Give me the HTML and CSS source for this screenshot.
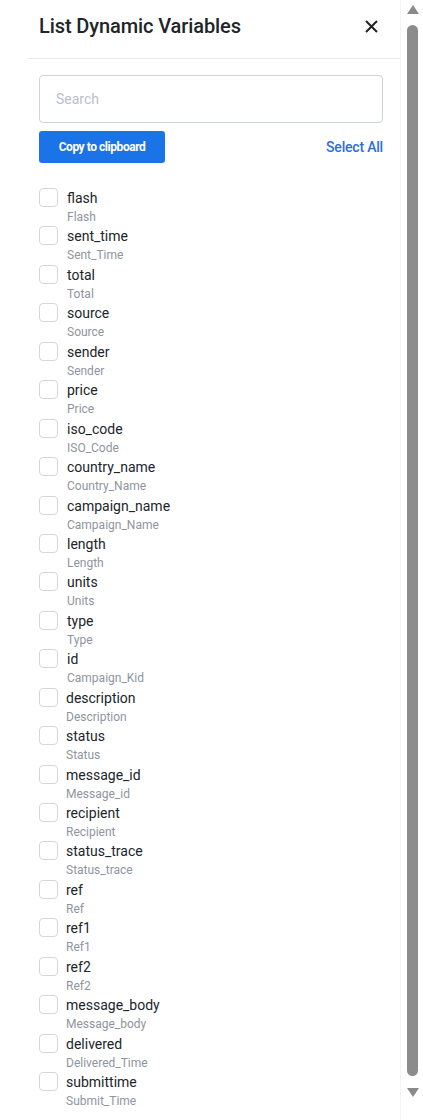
FILE: index.html
```html
<!DOCTYPE html>
<html>
<head>
<meta charset="utf-8">
<link rel="stylesheet" href="styles.css">
</head>
<body>
<div class="page">
  <div class="modal">
    <div class="header">
      <h1 class="title">List Dynamic Variables</h1>
      <button class="close" aria-label="Close">
        <svg width="13" height="13" viewBox="0 0 13 13"><path d="M1 1L12 12M12 1L1 12" stroke="#222" stroke-width="2" fill="none"/></svg>
      </button>
    </div>
    <div class="body">
      <input class="search" type="text" placeholder="Search">
      <div class="actions">
        <button class="copy">Copy to clipboard</button>
        <a class="select-all">Select All</a>
      </div>
      <ul class="list">
        <li class="item"><span class="box"></span><div class="text"><div class="name">flash</div><div class="sub">Flash</div></div></li>
        <li class="item"><span class="box"></span><div class="text"><div class="name">sent_time</div><div class="sub">Sent_Time</div></div></li>
        <li class="item"><span class="box"></span><div class="text"><div class="name">total</div><div class="sub">Total</div></div></li>
        <li class="item"><span class="box"></span><div class="text"><div class="name">source</div><div class="sub">Source</div></div></li>
        <li class="item"><span class="box"></span><div class="text"><div class="name">sender</div><div class="sub">Sender</div></div></li>
        <li class="item"><span class="box"></span><div class="text"><div class="name">price</div><div class="sub">Price</div></div></li>
        <li class="item"><span class="box"></span><div class="text"><div class="name">iso_code</div><div class="sub">ISO_Code</div></div></li>
        <li class="item"><span class="box"></span><div class="text"><div class="name">country_name</div><div class="sub">Country_Name</div></div></li>
        <li class="item"><span class="box"></span><div class="text"><div class="name">campaign_name</div><div class="sub">Campaign_Name</div></div></li>
        <li class="item"><span class="box"></span><div class="text"><div class="name">length</div><div class="sub">Length</div></div></li>
        <li class="item"><span class="box"></span><div class="text"><div class="name">units</div><div class="sub">Units</div></div></li>
        <li class="item"><span class="box"></span><div class="text"><div class="name">type</div><div class="sub">Type</div></div></li>
        <li class="item"><span class="box"></span><div class="text"><div class="name">id</div><div class="sub">Campaign_Kid</div></div></li>
        <li class="item shift"><span class="box"></span><div class="text"><div class="name">description</div><div class="sub">Description</div></div></li>
        <li class="item shift"><span class="box"></span><div class="text"><div class="name">status</div><div class="sub">Status</div></div></li>
        <li class="item shift"><span class="box"></span><div class="text"><div class="name">message_id</div><div class="sub">Message_id</div></div></li>
        <li class="item shift"><span class="box"></span><div class="text"><div class="name">recipient</div><div class="sub">Recipient</div></div></li>
        <li class="item shift"><span class="box"></span><div class="text"><div class="name">status_trace</div><div class="sub">Status_trace</div></div></li>
        <li class="item shift"><span class="box"></span><div class="text"><div class="name">ref</div><div class="sub">Ref</div></div></li>
        <li class="item shift"><span class="box"></span><div class="text"><div class="name">ref1</div><div class="sub">Ref1</div></div></li>
        <li class="item shift"><span class="box"></span><div class="text"><div class="name">ref2</div><div class="sub">Ref2</div></div></li>
        <li class="item shift"><span class="box"></span><div class="text"><div class="name">message_body</div><div class="sub">Message_body</div></div></li>
        <li class="item shift"><span class="box"></span><div class="text"><div class="name">delivered</div><div class="sub">Delivered_Time</div></div></li>
        <li class="item shift"><span class="box"></span><div class="text"><div class="name">submittime</div><div class="sub">Submit_Time</div></div></li>
      </ul>
    </div>
  </div>
  <div class="scrollbar">
    <div class="arrow up"></div>
    <div class="thumb"></div>
    <div class="arrow down"></div>
  </div>
</div>
</body>
</html>
```
FILE: styles.css
```css
* { box-sizing: border-box; }
html, body { margin: 0; padding: 0; background: #fff; }
body {
  font-family: Roboto, "Liberation Sans", Arial, sans-serif;
  color: #212529;
  width: 423px;
  height: 1120px;
  overflow: hidden;
}
.page {
  display: flex;
  height: 1120px;
}
.modal {
  flex: none;
  width: 373px;
  margin-left: 28px;
  border-right: 1px solid #f3f3f3;
}
.header {
  height: 59px;
  display: flex;
  align-items: center;
  justify-content: space-between;
  padding: 0 22px 6px 11px;
  border-bottom: 1px solid #e9ecef;
}
.title {
  margin: 0;
  font-size: 20px;
  font-weight: 500;
  color: #212529;
  letter-spacing: -0.1px;
}
.close {
  border: 0;
  background: none;
  padding: 0;
  width: 13px;
  height: 13px;
  display: flex;
}
.body {
  padding: 16px 17px 0 11px;
}
.search {
  display: block;
  width: 100%;
  height: 48px;
  border: 1px solid #ced4da;
  border-radius: 4px;
  padding: 0 16px;
  font-family: inherit;
  font-size: 14px;
  color: #495057;
  outline: none;
}
.search::placeholder { color: #b8bfc8; }
.actions {
  margin-top: 8px;
  display: flex;
  justify-content: space-between;
  align-items: center;
}
.copy {
  height: 32px;
  width: 126px;
  border: 0;
  border-radius: 3px;
  background: #1b73e8;
  color: #fff;
  font-family: inherit;
  font-weight: 700;
  font-size: 12px;
  letter-spacing: -0.45px;
  padding: 0;
}
.select-all {
  color: #2b6fdc;
  font-size: 14px;
  font-weight: 500;
  letter-spacing: -0.2px;
  margin-top: -1px;
}
.list {
  list-style: none;
  margin: 25px 0 0;
  padding: 0;
}
.item {
  display: flex;
  align-items: flex-start;
  height: 38.45px;
}
.box {
  flex: none;
  width: 19px;
  height: 19px;
  border: 1px solid #d3d7dc;
  border-radius: 4px;
  margin-right: 9px;
}
.item.shift .box { margin-right: 8px; }
.name {
  font-size: 14px;
  line-height: 21px;
  color: #212529;
}
.sub {
  font-size: 12px;
  line-height: 17px;
  color: #8e959d;
}
.scrollbar {
  flex: none;
  width: 22px;
  display: flex;
  flex-direction: column;
  align-items: center;
  padding-left: 1px;
}
.arrow {
  width: 0;
  height: 0;
  border-left: 6px solid transparent;
  border-right: 6px solid transparent;
  flex: none;
}
.arrow.up {
  margin-top: 5px;
  border-bottom: 9px solid #8a8a8a;
}
.arrow.down {
  margin-top: 12px;
  border-top: 9px solid #8a8a8a;
}
.thumb {
  width: 11px;
  height: 1051px;
  margin-top: 11px;
  background: #8c8c8c;
  border-radius: 6px;
}
```
